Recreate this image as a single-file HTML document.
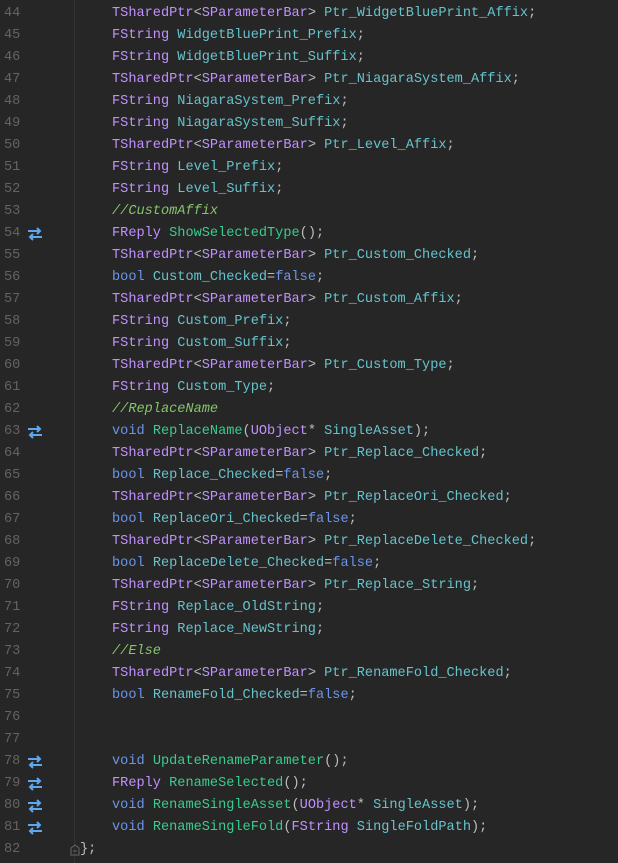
<!DOCTYPE html>
<html><head><style>
body{margin:0;background:#262626;width:618px;height:863px;overflow:hidden;position:relative;font-family:"Liberation Mono",monospace;font-size:13.6px}
.g{position:absolute;left:74px;top:0;width:1px;height:863px;background:#333}
.l{position:absolute;left:0;height:22px;line-height:22px;white-space:pre;width:618px;margin-top:2px}
.n{position:absolute;left:4px;color:#636363;width:26px}
.c{position:absolute;left:112px;color:#bdbdbd}
.t{color:#c191ff}.f{color:#66c3cc}.m{color:#39cc8f}.k{color:#6c95eb}.cm{color:#85c46c;font-style:italic}
.i{position:absolute;left:27px;top:4px}
</style></head><body>
<div class="g"></div>
<div class="l" style="top:1px"><span class="n">44</span><span class="c"><span class="t">TSharedPtr</span>&lt;<span class="t">SParameterBar</span>&gt; <span class="f">Ptr_WidgetBluePrint_Affix</span>;</span></div>
<div class="l" style="top:23px"><span class="n">45</span><span class="c"><span class="t">FString</span> <span class="f">WidgetBluePrint_Prefix</span>;</span></div>
<div class="l" style="top:45px"><span class="n">46</span><span class="c"><span class="t">FString</span> <span class="f">WidgetBluePrint_Suffix</span>;</span></div>
<div class="l" style="top:67px"><span class="n">47</span><span class="c"><span class="t">TSharedPtr</span>&lt;<span class="t">SParameterBar</span>&gt; <span class="f">Ptr_NiagaraSystem_Affix</span>;</span></div>
<div class="l" style="top:89px"><span class="n">48</span><span class="c"><span class="t">FString</span> <span class="f">NiagaraSystem_Prefix</span>;</span></div>
<div class="l" style="top:111px"><span class="n">49</span><span class="c"><span class="t">FString</span> <span class="f">NiagaraSystem_Suffix</span>;</span></div>
<div class="l" style="top:133px"><span class="n">50</span><span class="c"><span class="t">TSharedPtr</span>&lt;<span class="t">SParameterBar</span>&gt; <span class="f">Ptr_Level_Affix</span>;</span></div>
<div class="l" style="top:155px"><span class="n">51</span><span class="c"><span class="t">FString</span> <span class="f">Level_Prefix</span>;</span></div>
<div class="l" style="top:177px"><span class="n">52</span><span class="c"><span class="t">FString</span> <span class="f">Level_Suffix</span>;</span></div>
<div class="l" style="top:199px"><span class="n">53</span><span class="c"><span class="cm">//CustomAffix</span></span></div>
<div class="l" style="top:221px"><span class="n">54</span><svg class="i" width="16" height="14" viewBox="0 0 16 14"><path d="M1 4H13M10 1L13 4L10 7M15 10H3M6 7L3 10L6 13" stroke="#5ea8f0" stroke-width="2" fill="none"/></svg><span class="c"><span class="t">FReply</span> <span class="m">ShowSelectedType</span>();</span></div>
<div class="l" style="top:243px"><span class="n">55</span><span class="c"><span class="t">TSharedPtr</span>&lt;<span class="t">SParameterBar</span>&gt; <span class="f">Ptr_Custom_Checked</span>;</span></div>
<div class="l" style="top:265px"><span class="n">56</span><span class="c"><span class="k">bool</span> <span class="f">Custom_Checked</span>=<span class="k">false</span>;</span></div>
<div class="l" style="top:287px"><span class="n">57</span><span class="c"><span class="t">TSharedPtr</span>&lt;<span class="t">SParameterBar</span>&gt; <span class="f">Ptr_Custom_Affix</span>;</span></div>
<div class="l" style="top:309px"><span class="n">58</span><span class="c"><span class="t">FString</span> <span class="f">Custom_Prefix</span>;</span></div>
<div class="l" style="top:331px"><span class="n">59</span><span class="c"><span class="t">FString</span> <span class="f">Custom_Suffix</span>;</span></div>
<div class="l" style="top:353px"><span class="n">60</span><span class="c"><span class="t">TSharedPtr</span>&lt;<span class="t">SParameterBar</span>&gt; <span class="f">Ptr_Custom_Type</span>;</span></div>
<div class="l" style="top:375px"><span class="n">61</span><span class="c"><span class="t">FString</span> <span class="f">Custom_Type</span>;</span></div>
<div class="l" style="top:397px"><span class="n">62</span><span class="c"><span class="cm">//ReplaceName</span></span></div>
<div class="l" style="top:419px"><span class="n">63</span><svg class="i" width="16" height="14" viewBox="0 0 16 14"><path d="M1 4H13M10 1L13 4L10 7M15 10H3M6 7L3 10L6 13" stroke="#5ea8f0" stroke-width="2" fill="none"/></svg><span class="c"><span class="k">void</span> <span class="m">ReplaceName</span>(<span class="t">UObject</span>* <span class="f">SingleAsset</span>);</span></div>
<div class="l" style="top:441px"><span class="n">64</span><span class="c"><span class="t">TSharedPtr</span>&lt;<span class="t">SParameterBar</span>&gt; <span class="f">Ptr_Replace_Checked</span>;</span></div>
<div class="l" style="top:463px"><span class="n">65</span><span class="c"><span class="k">bool</span> <span class="f">Replace_Checked</span>=<span class="k">false</span>;</span></div>
<div class="l" style="top:485px"><span class="n">66</span><span class="c"><span class="t">TSharedPtr</span>&lt;<span class="t">SParameterBar</span>&gt; <span class="f">Ptr_ReplaceOri_Checked</span>;</span></div>
<div class="l" style="top:507px"><span class="n">67</span><span class="c"><span class="k">bool</span> <span class="f">ReplaceOri_Checked</span>=<span class="k">false</span>;</span></div>
<div class="l" style="top:529px"><span class="n">68</span><span class="c"><span class="t">TSharedPtr</span>&lt;<span class="t">SParameterBar</span>&gt; <span class="f">Ptr_ReplaceDelete_Checked</span>;</span></div>
<div class="l" style="top:551px"><span class="n">69</span><span class="c"><span class="k">bool</span> <span class="f">ReplaceDelete_Checked</span>=<span class="k">false</span>;</span></div>
<div class="l" style="top:573px"><span class="n">70</span><span class="c"><span class="t">TSharedPtr</span>&lt;<span class="t">SParameterBar</span>&gt; <span class="f">Ptr_Replace_String</span>;</span></div>
<div class="l" style="top:595px"><span class="n">71</span><span class="c"><span class="t">FString</span> <span class="f">Replace_OldString</span>;</span></div>
<div class="l" style="top:617px"><span class="n">72</span><span class="c"><span class="t">FString</span> <span class="f">Replace_NewString</span>;</span></div>
<div class="l" style="top:639px"><span class="n">73</span><span class="c"><span class="cm">//Else</span></span></div>
<div class="l" style="top:661px"><span class="n">74</span><span class="c"><span class="t">TSharedPtr</span>&lt;<span class="t">SParameterBar</span>&gt; <span class="f">Ptr_RenameFold_Checked</span>;</span></div>
<div class="l" style="top:683px"><span class="n">75</span><span class="c"><span class="k">bool</span> <span class="f">RenameFold_Checked</span>=<span class="k">false</span>;</span></div>
<div class="l" style="top:705px"><span class="n">76</span></div>
<div class="l" style="top:727px"><span class="n">77</span></div>
<div class="l" style="top:749px"><span class="n">78</span><svg class="i" width="16" height="14" viewBox="0 0 16 14"><path d="M1 4H13M10 1L13 4L10 7M15 10H3M6 7L3 10L6 13" stroke="#5ea8f0" stroke-width="2" fill="none"/></svg><span class="c"><span class="k">void</span> <span class="m">UpdateRenameParameter</span>();</span></div>
<div class="l" style="top:771px"><span class="n">79</span><svg class="i" width="16" height="14" viewBox="0 0 16 14"><path d="M1 4H13M10 1L13 4L10 7M15 10H3M6 7L3 10L6 13" stroke="#5ea8f0" stroke-width="2" fill="none"/></svg><span class="c"><span class="t">FReply</span> <span class="m">RenameSelected</span>();</span></div>
<div class="l" style="top:793px"><span class="n">80</span><svg class="i" width="16" height="14" viewBox="0 0 16 14"><path d="M1 4H13M10 1L13 4L10 7M15 10H3M6 7L3 10L6 13" stroke="#5ea8f0" stroke-width="2" fill="none"/></svg><span class="c"><span class="k">void</span> <span class="m">RenameSingleAsset</span>(<span class="t">UObject</span>* <span class="f">SingleAsset</span>);</span></div>
<div class="l" style="top:815px"><span class="n">81</span><svg class="i" width="16" height="14" viewBox="0 0 16 14"><path d="M1 4H13M10 1L13 4L10 7M15 10H3M6 7L3 10L6 13" stroke="#5ea8f0" stroke-width="2" fill="none"/></svg><span class="c"><span class="k">void</span> <span class="m">RenameSingleFold</span>(<span class="t">FString</span> <span class="f">SingleFoldPath</span>);</span></div>
<div class="l" style="top:837px"><span class="n">82</span><svg style="position:absolute;left:70px;top:5px" width="10" height="12" viewBox="0 0 10 12"><path d="M1 4L5 1L9 4V11H1Z M3 7H7" stroke="#666" fill="none"/></svg><span class="c" style="left:80px">};</span></div>
</body></html>
